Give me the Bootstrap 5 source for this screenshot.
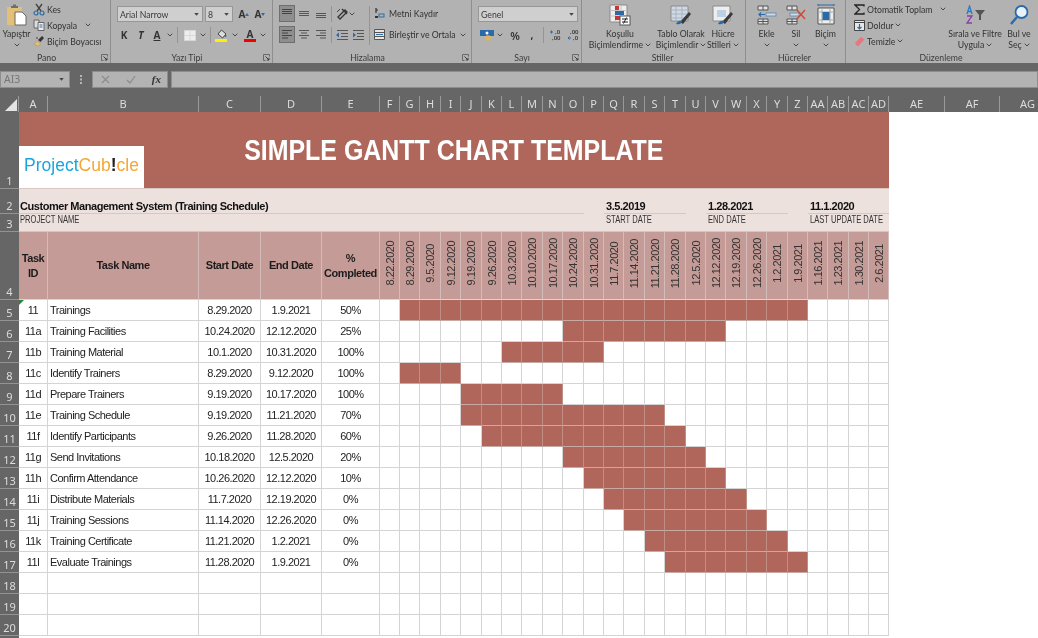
<!DOCTYPE html>
<html lang="tr">
<head>
<meta charset="utf-8">
<title>Simple Gantt Chart Template</title>
<link href="https://cdn.jsdelivr.net/npm/bootstrap@5.3.0/dist/css/bootstrap.min.css" rel="stylesheet">
<style>
html,body{height:100%;margin:0;overflow:hidden;background:#fff}
body{font-family:"Noto Sans",sans-serif;filter:blur(.35px)}
svg{display:block;flex:none}
/* ribbon */
.rb{height:63px;background:#b2b2b2;color:#333;font-family:"Lato","Noto Sans",sans-serif;font-size:8.7px;line-height:11px}
.rg{height:63px;flex:none;border-right:1px solid #8e8e8e;display:flex;flex-direction:column}
.rg-body{height:51px;display:flex}
.rg-foot{height:12px;display:flex;align-items:center;padding:0 2px 0 0;color:#3c3c3c}
.rg-foot>span{flex:1 1 auto;text-align:center}
.lf-pano{padding-right:8px}
.w-pano{width:111px}.w-font{width:162px}.w-hiz{width:199px}.w-say{width:110px}.w-sti{width:164px}.w-huc{width:100px}.w-duz{width:192px;border-right:0}
.stack{display:flex;flex-direction:column;padding-top:6px;gap:5px}
.lines{display:flex;flex-direction:column;padding-top:1px}
.lines>div{height:16px;display:flex;align-items:center;gap:2px;white-space:nowrap}
.irow{height:16px;display:flex;align-items:center}
.big{display:flex;flex-direction:column;align-items:center;text-align:center;white-space:nowrap;flex:none}
.big .ic{height:22px;margin-top:4px;margin-bottom:2px;display:flex;align-items:center;justify-content:center}
.big .tx{height:11px;display:flex;align-items:center;gap:2px;justify-content:center}
.cmb{height:16px;background:#cfcfcf;border:1px solid #979797;display:flex;align-items:center;justify-content:space-between;padding:0 3px 0 2px;color:#3a3a3a;font-size:8.7px;flex:none}
.c-font{width:86px;margin-left:6px}.c-size{width:28px;margin-left:2px}.c-gen{width:100px;margin-left:6px}
.cell-i{display:flex;align-items:center;justify-content:center;flex:none;height:16px;font-weight:700;color:#333;font-size:10px;font-family:"Noto Sans",sans-serif;line-height:1}
.sw14{width:14px}.sw16{width:16px}.sw18{width:18px}.sw20{width:20px}
.ml2{margin-left:2px}.ml3{margin-left:3px}.ml4{margin-left:4px}.ml6{margin-left:6px}.ml7{margin-left:7px}.ml8{margin-left:8px}
.vsep{width:1px;height:16px;background:#959595;flex:none;margin:0 4px}
.vs2{margin:0 2px}
.sel{border:1px solid #6f6f6f;background:#8f8f8f;width:16px;height:17px;display:flex;align-items:center;justify-content:center;flex:none}
.plain{width:17px;height:16px;display:flex;align-items:center;justify-content:center;flex:none}
.hz-a{width:90px;margin-left:6px}
.hz1{display:flex;flex-direction:column;padding-top:5px;gap:4px;flex:none}
.hz-row{height:17px;display:flex;align-items:center}
.w-kos{width:70px}.w-tab{width:52px}.w-hcr{width:32px}
.w-ek{width:29px}.w-sl{width:30px}.w-bc{width:29px}
.w-list{width:96px}.w-sr{width:52px}.w-bl{width:36px}
.pnb{width:33px}
.ic-sm{width:12px;display:flex;justify-content:center;flex:none}
.pct{font-size:11px;font-weight:600}
.dec{font-size:6px;font-family:"Noto Sans",sans-serif;font-weight:600;fill:#3a3a3a}
/* formula bar */
.gap-band{height:8px;background:#666}
.fbar{height:17px;background:#666;display:flex}
.fbox{background:#b3b3b3;border:1px solid #8d8d8d;display:flex;align-items:center;color:#777;font-size:10.5px;flex:none}
.f-name{width:70px;justify-content:space-between;padding:0 5px 0 3px}
.f-dots{width:22px;display:flex;align-items:center;justify-content:center;flex:none}
.f-btn{width:76px;padding:0 6px 0 8px;justify-content:space-between}
.f-inp{flex:1 1 auto;margin-left:3px}
.fx{font-family:"Liberation Serif",serif;font-style:italic;font-weight:700;color:#333;font-size:11px}
.g-top{height:8px;background:#666}
/* sheet */
.sheet-wrap{height:542px;overflow:hidden;background:#fff}
.xl{table-layout:fixed;width:1056px;border-collapse:separate;border-spacing:0;margin:0;font-family:"Liberation Sans",sans-serif;font-size:11px;letter-spacing:-.5px;color:#222}
.c0{width:19px}.c1{width:29px}.c2{width:151px}.c3{width:62px}.c4{width:61px}.c5{width:58px}.n0{width:20px}.n1{width:21px}.c6{width:56px}.c7{width:55px}.c8{width:56px}
.xl>thead>tr>th,.xl>tbody>tr>th{background:#666;color:#dcdcdc;font-family:"Noto Sans",sans-serif;font-weight:400;padding:0;border:0;box-shadow:none;font-size:11px;letter-spacing:0}
.xl>thead>tr>th{height:16px;text-align:center;border-right:1px solid #999;line-height:16px;overflow:hidden;vertical-align:middle}
.xl>tbody>tr>th{text-align:center;vertical-align:bottom;border-bottom:1px solid #939393;line-height:15px}
.xl>thead>tr>th.corner{border-right:1px solid #999;background:#666;padding-top:2px}
.corner svg{margin:0 0 0 5px}
.xl>tbody>tr>td{padding:0;background:#fff;color:#222;border:0;border-right:1px solid #d4d4d4;border-bottom:1px solid #d4d4d4;box-shadow:none;text-align:center;vertical-align:middle;white-space:nowrap;overflow:hidden;line-height:14px}
.xl>tbody>tr.rw>td,.xl>tbody>tr.rw>th{height:21px}
.xl>tbody>tr>td.tl{text-align:left;padding-left:2px}
.xl>tbody>tr>td.bar{background:#b0665a;border-right-color:#c08e85;border-bottom-color:#c9a9a3}
.xl>tbody>tr.r1>td{height:77px;background:#b0675b;border:0;border-bottom:1px solid #d9c9c5;color:#fff;font-weight:700;font-size:29px;letter-spacing:0;position:relative;overflow:visible;line-height:32px}
.ttl{display:inline-block;transform:scaleX(.86)}
.xl>tbody>tr.r2>td{height:25px;background:#ede1dd;border:0;vertical-align:bottom;font-weight:700;text-align:left;padding:0 0 0 2px;line-height:14px;color:#111;letter-spacing:-.45px}
.xl>tbody>tr.r2>td.ul{border-bottom:1px solid #d6c9c5}
.xl>tbody>tr.r2>td.pn,.xl>tbody>tr.r3>td.pn{padding-left:1px}
.xl>tbody>tr.r3>td{height:18px;background:#ede1dd;border:0;border-bottom:1px solid #d0c8c5;text-align:left;padding:0 0 0 2px;font-size:10px;letter-spacing:0;color:#333;line-height:12px;vertical-align:top;overflow:visible}
.cap{display:inline-block;transform:scaleX(.76);transform-origin:left center}
.xl>tbody>tr.r4>td{height:68px;background:#c59b97;border-right:1px solid #d3bcb9;border-bottom:1px solid #d7d7d7;font-weight:700;color:#1c1c1c;line-height:15px;white-space:normal;letter-spacing:-.45px}
.xl>tbody>tr.r4>td.dt{font-weight:400;color:#333;letter-spacing:-.5px}
.vt{display:inline-block;writing-mode:vertical-rl;transform:rotate(180deg);line-height:14px;white-space:nowrap}
.logo-box{position:absolute;left:0;bottom:0;width:125px;height:42px;background:#fff;display:flex;align-items:center;justify-content:center;font-family:"Liberation Sans",sans-serif;font-size:17.500px;font-weight:400;line-height:20px;padding-bottom:4px}
.lg-b{color:#19a6dd}.lg-o{color:#f5a733}.lg-d{color:#222;font-weight:700}
.xl>tbody>tr>td.gr{position:relative;overflow:visible}
.gr::before{content:"";position:absolute;left:0;top:0;border-style:solid;border-width:5px 5px 0 0;border-color:#1f8a3a transparent transparent transparent}
.xl>tbody>tr.r21>td{height:6px;border:0;background:#fff}
</style>
</head>
<body>
<svg width="0" height="0" class="position-absolute">
<defs>
<symbol id="chev" viewBox="0 0 6 4"><path d="M.7.7 3 3 5.300.7" fill="none" stroke="#4a4a4a" stroke-width="1"/></symbol>
<symbol id="dn" viewBox="0 0 6 4"><path d="M0 0h6L3 3.500z" fill="#444"/></symbol>
<symbol id="launch" viewBox="0 0 7 7"><path d="M.5 6.500v-6h6v2M.5 6.500h2" fill="none" stroke="#6a6a6a"/><path d="M2.500 2.500 6 6M6 3.800V6H3.800" fill="none" stroke="#3f3f3f"/></symbol>
</defs>
</svg>

<div class="rb d-flex">
  <section class="rg w-pano">
    <div class="rg-body">
      <div class="big pnb">
        <div class="ic"><svg width="22" height="22" viewBox="0 0 22 22"><rect x="1" y="3" width="15" height="18" rx="1" fill="#e3c077"/><path d="M5 4V2h2V.6h3V2h2v2z" fill="#6f6f6f"/><path d="M9 8h7l4 4v9H9z" fill="#fff" stroke="#666"/></svg></div>
        <div class="tx">Yapıştır</div>
        <div class="tx"><svg width="6" height="4"><use href="#chev"/></svg></div>
      </div>
      <div class="lines">
        <div><svg width="12" height="13" viewBox="0 0 12 13"><path d="M3 1l5 7M9 1 4 8" stroke="#444" stroke-width="1.300" fill="none"/><circle cx="3" cy="10" r="2" fill="none" stroke="#2d6ca8" stroke-width="1.200"/><circle cx="9" cy="10" r="2" fill="none" stroke="#2d6ca8" stroke-width="1.200"/></svg>Kes</div>
        <div><svg width="12" height="12" viewBox="0 0 12 12"><path d="M1 1h5v8H1z" fill="#ddd" stroke="#666"/><path d="M5 3.500h6v8H5z" fill="#eee" stroke="#666"/><path d="M6.500 6h3M6.500 8h3" stroke="#2d6ca8"/></svg>Kopyala<svg class="ml6" width="6" height="4"><use href="#chev"/></svg></div>
        <div><svg width="12" height="12" viewBox="0 0 12 12"><path d="M1 9l3.500-3 3 3-2.500 2.500z" fill="#e3c077" stroke="#a88a45" stroke-width=".5"/><path d="M5 5 9 1l2 2-3.500 4z" fill="#333"/><circle cx="4" cy="3" r=".8" fill="#333"/></svg>Biçim Boyacısı</div>
      </div>
    </div>
    <div class="rg-foot"><span class="lf-pano">Pano</span><svg width="7" height="7"><use href="#launch"/></svg></div>
  </section>
  <section class="rg w-font">
    <div class="rg-body stack">
      <div class="irow">
        <div class="cmb c-font"><span>Arial Narrow</span><svg width="5" height="3"><use href="#dn"/></svg></div>
        <div class="cmb c-size"><span>8</span><svg width="5" height="3"><use href="#dn"/></svg></div>
        <div class="cell-i sw16 ml3">A<svg width="4" height="3" viewBox="0 0 4 3"><path d="M0 3l2-3 2 3z" fill="#2d6ca8"/></svg></div>
        <div class="cell-i sw16">A<svg width="4" height="3" viewBox="0 0 4 3"><path d="M0 0l2 3 2-3z" fill="#2d6ca8"/></svg></div>
      </div>
      <div class="irow">
        <div class="cell-i sw18 ml4">K</div>
        <div class="cell-i sw16 fst-italic">T</div>
        <div class="cell-i sw16 text-decoration-underline">A</div>
        <svg class="ml2" width="6" height="4"><use href="#chev"/></svg>
        <div class="vsep ml6"></div>
        <svg class="ml2" width="12" height="11" viewBox="0 0 12 11"><path d="M.5.5h11v10H.5zM6 .5v10M.5 5.500h11" fill="#eee" stroke="#d8d8d8"/></svg>
        <svg class="ml4" width="6" height="4"><use href="#chev"/></svg>
        <div class="vsep"></div>
        <svg width="13" height="14" viewBox="0 0 13 14"><path d="M3 6l3.500-4L11 6l-3.500 4z" fill="#ddd" stroke="#444"/><circle cx="10.500" cy="8" r="1" fill="#2d6ca8"/><rect x="0" y="11" width="12" height="3" fill="#ffef00"/></svg>
        <svg class="ml4" width="6" height="4"><use href="#chev"/></svg>
        <div class="cell-i sw20 ml2 flex-column"><span>A</span><svg width="12" height="3"><rect width="12" height="3" fill="#f20000"/></svg></div>
        <svg width="6" height="4"><use href="#chev"/></svg>
      </div>
    </div>
    <div class="rg-foot"><span>Yazı Tipi</span><svg width="7" height="7"><use href="#launch"/></svg></div>
  </section>
  <section class="rg w-hiz">
    <div class="rg-body">
      <div class="hz1 hz-a">
        <div class="hz-row">
          <div class="sel"><svg width="10" height="9" viewBox="0 0 10 9"><path d="M0 .5h10M0 2.500h10M0 4.500h10" stroke="#444"/></svg></div>
          <div class="plain"><svg width="10" height="9" viewBox="0 0 10 9"><path d="M0 2.500h10M0 4.500h10M0 6.500h10" stroke="#555"/></svg></div>
          <div class="plain"><svg width="10" height="9" viewBox="0 0 10 9"><path d="M0 4.500h10M0 6.500h10M0 8.500h10" stroke="#555"/></svg></div>
          <div class="vsep vs2"></div>
          <svg class="ml2" width="13" height="12" viewBox="0 0 13 12"><path d="M2 9 9 2l2 2-7 7zM6 1l5 5" fill="none" stroke="#333" stroke-width="1.300"/><path d="M1 4l3-3" stroke="#444"/></svg>
          <svg width="6" height="4"><use href="#chev"/></svg>
        </div>
        <div class="hz-row">
          <div class="sel"><svg width="10" height="9" viewBox="0 0 10 9"><path d="M0 .5h10M0 3h6M0 5.500h10M0 8h6" stroke="#444"/></svg></div>
          <div class="plain"><svg width="10" height="9" viewBox="0 0 10 9"><path d="M0 .5h10M2 3h6M0 5.500h10M2 8h6" stroke="#555"/></svg></div>
          <div class="plain"><svg width="10" height="9" viewBox="0 0 10 9"><path d="M0 .5h10M4 3h6M0 5.500h10M4 8h6" stroke="#555"/></svg></div>
          <div class="vsep vs2"></div>
          <svg class="ml2" width="12" height="10" viewBox="0 0 12 10"><path d="M0 5l3-2.500v5z" fill="#2d6ca8"/><path d="M1 .5h11M5 3.500h7M5 6.500h7M1 9.500h11" stroke="#555"/></svg>
          <svg class="ml4" width="12" height="10" viewBox="0 0 12 10"><path d="M4 5 1 2.500v5z" fill="#2d6ca8"/><path d="M1 .5h11M5 3.500h7M5 6.500h7M1 9.500h11" stroke="#555"/></svg>
        </div>
      </div>
      <div class="vsep align-self-center ms-0 h-75"></div>
      <div class="hz1">
        <div class="hz-row gap-1"><svg width="11" height="12" viewBox="0 0 11 12"><path d="M2 0v5M2 2h2" stroke="#333" stroke-width="1.200"/><rect x="5" y="6" width="5" height="3" fill="none" stroke="#2d6ca8"/><rect x="1" y="8" width="3" height="2" fill="#333"/></svg><span>Metni Kaydır</span></div>
        <div class="hz-row gap-1"><svg width="11" height="11" viewBox="0 0 11 11"><path d="M.5.5h10v10H.5zM.5 3.500h10M.5 7.500h10" fill="#e6e6e6" stroke="#555"/><path d="M2 5.500h7" stroke="#2d6ca8"/></svg><span>Birleştir ve Ortala</span><svg width="6" height="4"><use href="#chev"/></svg></div>
      </div>
    </div>
    <div class="rg-foot"><span>Hizalama</span><svg width="7" height="7"><use href="#launch"/></svg></div>
  </section>
  <section class="rg w-say">
    <div class="rg-body stack">
      <div class="cmb c-gen"><span>Genel</span><svg width="5" height="3"><use href="#dn"/></svg></div>
      <div class="irow">
        <svg class="ml8" width="14" height="12" viewBox="0 0 14 12"><rect x="0" y="1" width="14" height="6" fill="#2a6aa8"/><circle cx="7" cy="4" r="1.500" fill="#fff"/><circle cx="8" cy="9" r="2.800" fill="#e0b45e"/></svg>
        <svg class="ml3" width="6" height="4"><use href="#chev"/></svg>
        <span class="cell-i sw16 ml4 pct">%</span>
        <span class="cell-i sw14 ml2">,</span>
        <div class="vsep"></div>
        <svg class="ml2" width="13" height="12" viewBox="0 0 13 12"><path d="M0 3h3M1.500 1.500v3" stroke="#2d6ca8"/><text class="dec" x="5" y="5">,0</text><text class="dec" x="2" y="11">,00</text></svg>
        <svg class="ml4" width="13" height="12" viewBox="0 0 13 12"><path d="M1 9h3M2.500 7.500 1 9l1.500 1.500" fill="none" stroke="#2d6ca8"/><text class="dec" x="3" y="5">,00</text><text class="dec" x="6" y="11">,0</text></svg>
      </div>
    </div>
    <div class="rg-foot"><span>Sayı</span><svg width="7" height="7"><use href="#launch"/></svg></div>
  </section>
  <section class="rg w-sti">
    <div class="rg-body">
      <div class="big w-kos ml3">
        <div class="ic"><svg width="22" height="22" viewBox="0 0 22 22"><path d="M1 1h17v17H1z" fill="#eee" stroke="#8a8a8a"/><path d="M1 6.500h17M1 12h17M6.500 1v17M12 1v17" stroke="#c4c4c4"/><rect x="6" y="2" width="4" height="4" fill="#c33"/><rect x="6" y="7" width="9" height="4" fill="#2a6aa8"/><rect x="6" y="12" width="5" height="4" fill="#c33"/><rect x="11" y="12" width="10" height="9" fill="#fff" stroke="#555"/><path d="M13 15h6M13 18h6M17.500 13.500l-3 6" stroke="#222"/></svg></div>
        <div class="tx">Koşullu</div>
        <div class="tx">Biçimlendirme<svg width="6" height="4"><use href="#chev"/></svg></div>
      </div>
      <div class="big w-tab">
        <div class="ic"><svg width="22" height="22" viewBox="0 0 22 22"><path d="M1 2h17v15H1z" fill="#d0d9e4" stroke="#8a8a8a"/><path d="M1 6h17M1 10h17M1 14h17M6 2v15M12 2v15" stroke="#a9b3bf"/><path d="M10 18 19 8l2 2-8 10z" fill="#3a3a3a"/><path d="M6 20c1-3 4-4 6-3 0 2-2 4-6 3z" fill="#2a6aa8"/></svg></div>
        <div class="tx">Tablo Olarak</div>
        <div class="tx">Biçimlendir<svg width="6" height="4"><use href="#chev"/></svg></div>
      </div>
      <div class="big w-hcr">
        <div class="ic"><svg width="22" height="22" viewBox="0 0 22 22"><path d="M1 2h17v15H1z" fill="#eee" stroke="#8a8a8a"/><rect x="5" y="6" width="9" height="7" fill="#bcd0e6"/><path d="M10 18 19 8l2 2-8 10z" fill="#3a3a3a"/><path d="M6 20c1-3 4-4 6-3 0 2-2 4-6 3z" fill="#2a6aa8"/></svg></div>
        <div class="tx">Hücre</div>
        <div class="tx">Stilleri<svg width="6" height="4"><use href="#chev"/></svg></div>
      </div>
    </div>
    <div class="rg-foot"><span>Stiller</span></div>
  </section>
  <section class="rg w-huc">
    <div class="rg-body">
      <div class="big w-ek ml6">
        <div class="ic"><svg width="20" height="20" viewBox="0 0 20 20"><path d="M1 1h10v4H1zM1 14h10v5H1zM6 1v4M6 14v5M1 16.500h10" fill="#e2e2e2" stroke="#555"/><rect x="9" y="8" width="10" height="3" fill="#cfdcea" stroke="#6d8fb5"/><path d="M8 9.500H2M4 7.500l-2 2 2 2" fill="none" stroke="#2a6aa8" stroke-width="1.200"/></svg></div>
        <div class="tx">Ekle</div>
        <div class="tx"><svg width="6" height="4"><use href="#chev"/></svg></div>
      </div>
      <div class="big w-sl">
        <div class="ic"><svg width="20" height="20" viewBox="0 0 20 20"><path d="M1 1h10v4H1zM1 14h10v5H1zM6 1v4M6 14v5M1 16.500h10" fill="#e2e2e2" stroke="#555"/><rect x="4" y="8" width="9" height="3" fill="#cfdcea" stroke="#6d8fb5"/><path d="M11 5l8 9M19 5l-8 9" stroke="#d8452c" stroke-width="1.400"/></svg></div>
        <div class="tx">Sil</div>
        <div class="tx"><svg width="6" height="4"><use href="#chev"/></svg></div>
      </div>
      <div class="big w-bc">
        <div class="ic"><svg width="20" height="22" viewBox="0 0 20 22"><path d="M2 1h16M2 0v2M18 0v2" stroke="#2a6aa8"/><path d="M2 4h16v16H2z" fill="#eee" stroke="#555"/><path d="M2 8h16M2 16h16M6 4v16M14 4v16" stroke="#aaa"/><rect x="6.500" y="8" width="7" height="8" fill="#2a6aa8"/></svg></div>
        <div class="tx">Biçim</div>
        <div class="tx"><svg width="6" height="4"><use href="#chev"/></svg></div>
      </div>
    </div>
    <div class="rg-foot"><span>Hücreler</span></div>
  </section>
  <section class="rg w-duz">
    <div class="rg-body">
      <div class="lines ml7 w-list">
        <div><div class="ic-sm"><svg width="11" height="11" viewBox="0 0 11 11"><path d="M10 2.500V1H1l4.500 4.500L1 10h9V8.500" fill="none" stroke="#222" stroke-width="1.300"/></svg></div>Otomatik Toplam<svg class="ml6" width="6" height="4"><use href="#chev"/></svg></div>
        <div><div class="ic-sm"><svg width="11" height="11" viewBox="0 0 11 11"><path d="M.5.5h10v10H.5z" fill="#e8e8e8" stroke="#444"/><path d="M.5 2.500h10" stroke="#444"/><path d="M5.500 4v5M3.500 7l2 2 2-2" fill="none" stroke="#2a6aa8" stroke-width="1.200"/></svg></div>Doldur<svg width="6" height="4"><use href="#chev"/></svg></div>
        <div><div class="ic-sm"><svg width="11" height="11" viewBox="0 0 11 11"><path d="M1 7l6-6 3.500 2.500-6 6.500H3z" fill="#e9757f"/></svg></div>Temizle<svg width="6" height="4"><use href="#chev"/></svg></div>
      </div>
      <div class="big w-sr">
        <div class="ic"><svg width="22" height="20" viewBox="0 0 22 20"><path d="M11 5h10l-4 5v5h-2v-5z" fill="#555"/><path d="M3 9 5.500 1 8 9M4 6.500h3" fill="none" stroke="#2a7bc8" stroke-width="1.300"/><path d="M3 11h5l-5 7h5" fill="none" stroke="#8a3fb0" stroke-width="1.300"/></svg></div>
        <div class="tx">Sırala ve Filtre</div>
        <div class="tx">Uygula<svg width="6" height="4"><use href="#chev"/></svg></div>
      </div>
      <div class="big w-bl">
        <div class="ic"><svg width="20" height="22" viewBox="0 0 20 22"><circle cx="12.500" cy="8" r="6" fill="#e9f1f8" stroke="#2a6aa8" stroke-width="1.800"/><path d="M8 13 2 20" stroke="#2a6aa8" stroke-width="2.400"/></svg></div>
        <div class="tx">Bul ve</div>
        <div class="tx">Seç<svg width="6" height="4"><use href="#chev"/></svg></div>
      </div>
    </div>
    <div class="rg-foot"><span>Düzenleme</span></div>
  </section>
</div>

<div class="gap-band"></div>
<div class="fbar">
  <div class="fbox f-name"><span>AI3</span><svg width="5" height="3"><use href="#dn"/></svg></div>
  <div class="f-dots"><svg width="2" height="9" viewBox="0 0 2 9"><path d="M1 0v2M1 3.500v2M1 7v2" stroke="#cfcfcf" stroke-width="1.500"/></svg></div>
  <div class="fbox f-btn"><svg width="9" height="9" viewBox="0 0 9 9"><path d="M1 1l7 7M8 1 1 8" stroke="#8c8c8c" stroke-width="1.200"/></svg><svg width="10" height="9" viewBox="0 0 10 9"><path d="M1 5l3 3 5-7" fill="none" stroke="#8c8c8c" stroke-width="1.200"/></svg><span class="fx">fx</span></div>
  <div class="fbox f-inp"></div>
</div>
<div class="g-top"></div>

<div class="sheet-wrap">
<table class="table xl">
<colgroup>
<col class="c0"><col class="c1"><col class="c2"><col class="c3"><col class="c4"><col class="c5">
<col class="n0"><col class="n0"><col class="n1"><col class="n0"><col class="n1"><col class="n0"><col class="n0"><col class="n1"><col class="n0"><col class="n1"><col class="n0"><col class="n0"><col class="n1"><col class="n0"><col class="n1"><col class="n0"><col class="n0"><col class="n1"><col class="n0"><col class="n1"><col class="n0"><col class="n0"><col class="n1"><col class="n0"><col class="n0">
<col class="c6"><col class="c7"><col class="c8">
</colgroup>
<thead><tr><th class="corner"><svg width="12" height="12" viewBox="0 0 12 12"><path d="M12 0v12H0z" fill="#e4e4e4"/></svg></th><th>A</th><th>B</th><th>C</th><th>D</th><th>E</th><th>F</th><th>G</th><th>H</th><th>I</th><th>J</th><th>K</th><th>L</th><th>M</th><th>N</th><th>O</th><th>P</th><th>Q</th><th>R</th><th>S</th><th>T</th><th>U</th><th>V</th><th>W</th><th>X</th><th>Y</th><th>Z</th><th>AA</th><th>AB</th><th>AC</th><th>AD</th><th>AE</th><th>AF</th><th>AG</th></tr></thead>
<tbody>
<tr class="r1"><th>1</th><td colspan="30"><span class="ttl">SIMPLE GANTT CHART TEMPLATE</span><div class="logo-box"><span class="lg-b">Project</span><span class="lg-o">Cub</span><span class="lg-d">!</span><span class="lg-o">cle</span></div></td></tr>
<tr class="r2"><th>2</th><td colspan="15" class="ul pn">Customer Management System (Training Schedule)</td><td></td><td colspan="4" class="ul">3.5.2019</td><td></td><td colspan="4" class="ul">1.28.2021</td><td></td><td colspan="4" class="ul">11.1.2020</td></tr>
<tr class="r3"><th>3</th><td colspan="15" class="pn"><span class="cap">PROJECT NAME</span></td><td></td><td colspan="4"><span class="cap">START DATE</span></td><td></td><td colspan="4"><span class="cap">END DATE</span></td><td></td><td colspan="4"><span class="cap">LAST UPDATE DATE</span></td></tr>
<tr class="r4"><th>4</th><td>Task<br>ID</td><td>Task Name</td><td>Start Date</td><td>End Date</td><td>%<br>Completed</td>
<td class="dt"><span class="vt">8.22.2020</span></td><td class="dt"><span class="vt">8.29.2020</span></td><td class="dt"><span class="vt">9.5.2020</span></td><td class="dt"><span class="vt">9.12.2020</span></td><td class="dt"><span class="vt">9.19.2020</span></td><td class="dt"><span class="vt">9.26.2020</span></td><td class="dt"><span class="vt">10.3.2020</span></td><td class="dt"><span class="vt">10.10.2020</span></td><td class="dt"><span class="vt">10.17.2020</span></td><td class="dt"><span class="vt">10.24.2020</span></td><td class="dt"><span class="vt">10.31.2020</span></td><td class="dt"><span class="vt">11.7.2020</span></td><td class="dt"><span class="vt">11.14.2020</span></td><td class="dt"><span class="vt">11.21.2020</span></td><td class="dt"><span class="vt">11.28.2020</span></td><td class="dt"><span class="vt">12.5.2020</span></td><td class="dt"><span class="vt">12.12.2020</span></td><td class="dt"><span class="vt">12.19.2020</span></td><td class="dt"><span class="vt">12.26.2020</span></td><td class="dt"><span class="vt">1.2.2021</span></td><td class="dt"><span class="vt">1.9.2021</span></td><td class="dt"><span class="vt">1.16.2021</span></td><td class="dt"><span class="vt">1.23.2021</span></td><td class="dt"><span class="vt">1.30.2021</span></td><td class="dt"><span class="vt">2.6.2021</span></td></tr>
<tr class="rw"><th>5</th><td class="gr">11</td><td class="tl">Trainings</td><td>8.29.2020</td><td>1.9.2021</td><td>50%</td><td></td><td class="bar"></td><td class="bar"></td><td class="bar"></td><td class="bar"></td><td class="bar"></td><td class="bar"></td><td class="bar"></td><td class="bar"></td><td class="bar"></td><td class="bar"></td><td class="bar"></td><td class="bar"></td><td class="bar"></td><td class="bar"></td><td class="bar"></td><td class="bar"></td><td class="bar"></td><td class="bar"></td><td class="bar"></td><td class="bar"></td><td></td><td></td><td></td><td></td></tr>
<tr class="rw"><th>6</th><td>11a</td><td class="tl">Training Facilities</td><td>10.24.2020</td><td>12.12.2020</td><td>25%</td><td></td><td></td><td></td><td></td><td></td><td></td><td></td><td></td><td></td><td class="bar"></td><td class="bar"></td><td class="bar"></td><td class="bar"></td><td class="bar"></td><td class="bar"></td><td class="bar"></td><td class="bar"></td><td></td><td></td><td></td><td></td><td></td><td></td><td></td><td></td></tr>
<tr class="rw"><th>7</th><td>11b</td><td class="tl">Training Material</td><td>10.1.2020</td><td>10.31.2020</td><td>100%</td><td></td><td></td><td></td><td></td><td></td><td></td><td class="bar"></td><td class="bar"></td><td class="bar"></td><td class="bar"></td><td class="bar"></td><td></td><td></td><td></td><td></td><td></td><td></td><td></td><td></td><td></td><td></td><td></td><td></td><td></td><td></td></tr>
<tr class="rw"><th>8</th><td>11c</td><td class="tl">Identify Trainers</td><td>8.29.2020</td><td>9.12.2020</td><td>100%</td><td></td><td class="bar"></td><td class="bar"></td><td class="bar"></td><td></td><td></td><td></td><td></td><td></td><td></td><td></td><td></td><td></td><td></td><td></td><td></td><td></td><td></td><td></td><td></td><td></td><td></td><td></td><td></td><td></td></tr>
<tr class="rw"><th>9</th><td>11d</td><td class="tl">Prepare Trainers</td><td>9.19.2020</td><td>10.17.2020</td><td>100%</td><td></td><td></td><td></td><td></td><td class="bar"></td><td class="bar"></td><td class="bar"></td><td class="bar"></td><td class="bar"></td><td></td><td></td><td></td><td></td><td></td><td></td><td></td><td></td><td></td><td></td><td></td><td></td><td></td><td></td><td></td><td></td></tr>
<tr class="rw"><th>10</th><td>11e</td><td class="tl">Training Schedule</td><td>9.19.2020</td><td>11.21.2020</td><td>70%</td><td></td><td></td><td></td><td></td><td class="bar"></td><td class="bar"></td><td class="bar"></td><td class="bar"></td><td class="bar"></td><td class="bar"></td><td class="bar"></td><td class="bar"></td><td class="bar"></td><td class="bar"></td><td></td><td></td><td></td><td></td><td></td><td></td><td></td><td></td><td></td><td></td><td></td></tr>
<tr class="rw"><th>11</th><td>11f</td><td class="tl">Identify Participants</td><td>9.26.2020</td><td>11.28.2020</td><td>60%</td><td></td><td></td><td></td><td></td><td></td><td class="bar"></td><td class="bar"></td><td class="bar"></td><td class="bar"></td><td class="bar"></td><td class="bar"></td><td class="bar"></td><td class="bar"></td><td class="bar"></td><td class="bar"></td><td></td><td></td><td></td><td></td><td></td><td></td><td></td><td></td><td></td><td></td></tr>
<tr class="rw"><th>12</th><td>11g</td><td class="tl">Send Invitations</td><td>10.18.2020</td><td>12.5.2020</td><td>20%</td><td></td><td></td><td></td><td></td><td></td><td></td><td></td><td></td><td></td><td class="bar"></td><td class="bar"></td><td class="bar"></td><td class="bar"></td><td class="bar"></td><td class="bar"></td><td class="bar"></td><td></td><td></td><td></td><td></td><td></td><td></td><td></td><td></td><td></td></tr>
<tr class="rw"><th>13</th><td>11h</td><td class="tl">Confirm Attendance</td><td>10.26.2020</td><td>12.12.2020</td><td>10%</td><td></td><td></td><td></td><td></td><td></td><td></td><td></td><td></td><td></td><td></td><td class="bar"></td><td class="bar"></td><td class="bar"></td><td class="bar"></td><td class="bar"></td><td class="bar"></td><td class="bar"></td><td></td><td></td><td></td><td></td><td></td><td></td><td></td><td></td></tr>
<tr class="rw"><th>14</th><td>11i</td><td class="tl">Distribute Materials</td><td>11.7.2020</td><td>12.19.2020</td><td>0%</td><td></td><td></td><td></td><td></td><td></td><td></td><td></td><td></td><td></td><td></td><td></td><td class="bar"></td><td class="bar"></td><td class="bar"></td><td class="bar"></td><td class="bar"></td><td class="bar"></td><td class="bar"></td><td></td><td></td><td></td><td></td><td></td><td></td><td></td></tr>
<tr class="rw"><th>15</th><td>11j</td><td class="tl">Training Sessions</td><td>11.14.2020</td><td>12.26.2020</td><td>0%</td><td></td><td></td><td></td><td></td><td></td><td></td><td></td><td></td><td></td><td></td><td></td><td></td><td class="bar"></td><td class="bar"></td><td class="bar"></td><td class="bar"></td><td class="bar"></td><td class="bar"></td><td class="bar"></td><td></td><td></td><td></td><td></td><td></td><td></td></tr>
<tr class="rw"><th>16</th><td>11k</td><td class="tl">Training Certificate</td><td>11.21.2020</td><td>1.2.2021</td><td>0%</td><td></td><td></td><td></td><td></td><td></td><td></td><td></td><td></td><td></td><td></td><td></td><td></td><td></td><td class="bar"></td><td class="bar"></td><td class="bar"></td><td class="bar"></td><td class="bar"></td><td class="bar"></td><td class="bar"></td><td></td><td></td><td></td><td></td><td></td></tr>
<tr class="rw"><th>17</th><td>11l</td><td class="tl">Evaluate Trainings</td><td>11.28.2020</td><td>1.9.2021</td><td>0%</td><td></td><td></td><td></td><td></td><td></td><td></td><td></td><td></td><td></td><td></td><td></td><td></td><td></td><td></td><td class="bar"></td><td class="bar"></td><td class="bar"></td><td class="bar"></td><td class="bar"></td><td class="bar"></td><td class="bar"></td><td></td><td></td><td></td><td></td></tr>
<tr class="rw"><th>18</th><td></td><td></td><td></td><td></td><td></td><td></td><td></td><td></td><td></td><td></td><td></td><td></td><td></td><td></td><td></td><td></td><td></td><td></td><td></td><td></td><td></td><td></td><td></td><td></td><td></td><td></td><td></td><td></td><td></td><td></td></tr>
<tr class="rw"><th>19</th><td></td><td></td><td></td><td></td><td></td><td></td><td></td><td></td><td></td><td></td><td></td><td></td><td></td><td></td><td></td><td></td><td></td><td></td><td></td><td></td><td></td><td></td><td></td><td></td><td></td><td></td><td></td><td></td><td></td><td></td></tr>
<tr class="rw"><th>20</th><td></td><td></td><td></td><td></td><td></td><td></td><td></td><td></td><td></td><td></td><td></td><td></td><td></td><td></td><td></td><td></td><td></td><td></td><td></td><td></td><td></td><td></td><td></td><td></td><td></td><td></td><td></td><td></td><td></td><td></td></tr>
<tr class="r21"><th></th><td colspan="30"></td></tr>
</tbody>
</table>
</div>
</body>
</html>
